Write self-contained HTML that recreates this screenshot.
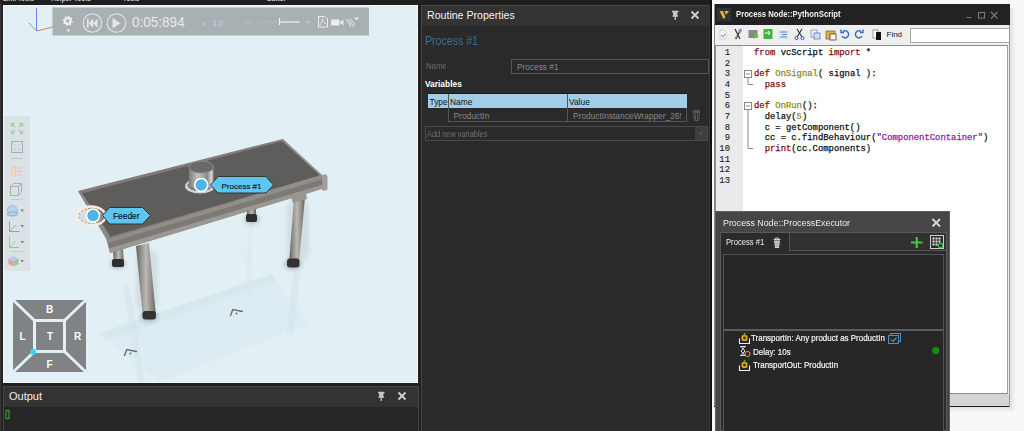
<!DOCTYPE html>
<html><head><meta charset="utf-8">
<style>
*{margin:0;padding:0;box-sizing:border-box}
html,body{width:1024px;height:431px;overflow:hidden;background:#1f1f1f;font-family:"Liberation Sans",sans-serif;position:relative}
.a{position:absolute}
.t{position:absolute;white-space:nowrap;line-height:1}
</style></head><body>

<!-- top menu remnants -->
<div class="t" style="left:3px;top:-4px;font-size:6.3px;color:#c8c8c8;font-weight:bold">Link Tools</div>
<div class="t" style="left:51px;top:-4px;font-size:6.7px;color:#d0d0d0;font-weight:bold">Helper Tools</div>
<div class="t" style="left:123px;top:-4px;font-size:6.3px;color:#d0d0d0;font-weight:bold">Tools</div>
<div class="t" style="left:267px;top:-4px;font-size:6.6px;color:#d0d0d0;font-weight:bold">Editor</div>
<div class="a" style="left:0;top:4px;width:2px;height:427px;background:linear-gradient(90deg,#343434 55%,#1c1c1c 100%)"></div>
<!-- viewport -->
<div class="a" id="vp" style="left:3px;top:5px;width:415px;height:378px;background:#e2f0f5;border:1px solid #f4fafc;overflow:hidden">
<svg class="a" style="left:-4px;top:-6px" width="1024" height="431" viewBox="0 0 1024 431">
 <defs>
  <linearGradient id="leg" x1="0" x2="1" y1="0" y2="0">
   <stop offset="0" stop-color="#625e5a"/><stop offset="0.25" stop-color="#94908b"/><stop offset="0.5" stop-color="#bcb8b3"/><stop offset="0.8" stop-color="#8c8884"/><stop offset="1" stop-color="#66625e"/>
  </linearGradient>
  <linearGradient id="rail" x1="0" x2="0" y1="0" y2="1">
   <stop offset="0" stop-color="#a7a39e"/><stop offset="0.5" stop-color="#8c8883"/><stop offset="1" stop-color="#6f6b67"/>
  </linearGradient>
  <linearGradient id="cyl" x1="0" x2="1" y1="0" y2="0">
   <stop offset="0" stop-color="#7e7c7a"/><stop offset="0.35" stop-color="#c4c2be"/><stop offset="0.75" stop-color="#8e8c88"/><stop offset="0.92" stop-color="#d8d8d6"/><stop offset="1" stop-color="#8a8886"/>
  </linearGradient>
  <filter id="bl" x="-50%" y="-50%" width="200%" height="200%"><feGaussianBlur stdDeviation="2.2"/></filter>
 </defs>
 <!-- floor reflection -->
 <polygon points="100,333 272,274 309,324 158,382" fill="#d8e9ef" opacity="0.55"/>
 <polygon points="100,333 272,274 276,280 106,341" fill="#d2e4ea" opacity="0.6"/>
 <line x1="126" y1="285" x2="142" y2="383" stroke="#d4e6ec" stroke-width="7" opacity="0.6"/>
 <line x1="297" y1="270" x2="290" y2="335" stroke="#d4e6ec" stroke-width="7" opacity="0.6"/>
 <line x1="250" y1="225" x2="249" y2="300" stroke="#d8e9ef" stroke-width="5" opacity="0.6"/>
 <!-- axis gizmo -->
 <line x1="36.5" y1="8" x2="36.5" y2="31" stroke="#6f7cf0" stroke-width="1"/>
 <line x1="29" y1="23" x2="36.5" y2="31" stroke="#60c060" stroke-width="1"/>
 <line x1="36.5" y1="31" x2="53" y2="27" stroke="#e07070" stroke-width="1"/>
 <!-- foot shadows -->
 <g filter="url(#bl)" fill="#8a9498" opacity="0.55">
  <ellipse cx="149" cy="316" rx="9" ry="6"/>
  <ellipse cx="293" cy="264" rx="9" ry="6"/>
  <ellipse cx="118" cy="264" rx="8" ry="5"/>
  <ellipse cx="252" cy="219" rx="8" ry="5"/>
  <rect x="136" y="250" width="22" height="60" rx="8" opacity="0.35"/>
  <rect x="287" y="200" width="22" height="60" rx="8" opacity="0.35"/>
 </g>
 <!-- legs back -->
 <polygon points="247,204 256,203 256,221 247,222" fill="url(#leg)"/>
 <rect x="246" y="214" width="11" height="8" rx="2" fill="#2e2e2e"/>
 <polygon points="113,249 123,248 124,266 114,267" fill="url(#leg)"/>
 <rect x="112" y="259" width="12" height="8" rx="2" fill="#2e2e2e"/>
 <!-- conveyor top frame -->
 <polygon points="78,191 283,139 322,175 107,240" fill="#807c78"/>
 <polygon points="81.5,193.5 282,141.2 320,175.5 109,237" fill="#5f5d5b"/>
 <polygon points="78,191 82.5,194 110,236 107,240" fill="#8f8b86"/>
 <line x1="283" y1="140" x2="320.5" y2="175" stroke="#a09c98" stroke-width="1"/>
 <!-- front rail -->
 <polygon points="106.5,239.5 320,175.5 326.5,175.5 326.5,187.5 110,253" fill="#7d7975"/>
 <polygon points="106.5,239.5 320,175.5 326.5,175.5 326.5,178 107.5,243" fill="#918d88"/>
 <polygon points="109,248.5 326.5,183.5 326.5,187.5 110,253" fill="#9b9792"/>
 <polygon points="322,176 325,174 327.5,176 327.5,190 322.5,191" fill="#a29e99"/>
<!-- legs front -->
 <polygon points="136,246 149,243 156,316 143,318" fill="url(#leg)"/>
 <rect x="142.5" y="311" width="13.5" height="8.5" rx="3" fill="#333"/>
 <polygon points="294,199 305,197 299,262 289,263" fill="url(#leg)"/>
 <polygon points="291,197 306,193 307,199 293,203" fill="#9a9691"/>
 <rect x="287" y="258.5" width="12.5" height="9" rx="3" fill="#333"/>
<!-- process cylinder -->
 <ellipse cx="200" cy="186" rx="15" ry="7.5" fill="#d2d2d0"/>
 <ellipse cx="200" cy="185.5" rx="12.5" ry="5.5" fill="#7d7b79"/>
 <path d="M189,167 V184 A12.3,5 0 0 0 213.6,184 V167 Z" fill="url(#cyl)"/>
 <ellipse cx="201.3" cy="167" rx="12.3" ry="6" fill="#6c6a68" stroke="#8f8d8a" stroke-width="1"/>
 <!-- feeder ring -->
 <ellipse cx="91" cy="216" rx="14.5" ry="9.5" fill="none" stroke="#f2eee8" stroke-width="2.5"/>
 <ellipse cx="91" cy="216" rx="12" ry="7.5" fill="rgba(200,204,204,0.45)" stroke="#d9902a" stroke-width="1" stroke-dasharray="2 2"/>
 <!-- markers -->
 <path d="M230.5,315.5 L232.8,309.5 L242.5,311.5" fill="none" stroke="#6e6e6e" stroke-width="1.4" stroke-linecap="round"/>
 <circle cx="236.5" cy="313.5" r="0.9" fill="#5e5e5e"/>
 <path d="M124.5,355.5 L126.8,349.5 L136.5,351.5" fill="none" stroke="#6e6e6e" stroke-width="1.4" stroke-linecap="round"/>
 <circle cx="130.5" cy="353.5" r="0.9" fill="#5e5e5e"/>
 <!-- labels -->
 <circle cx="93" cy="215.5" r="6.5" fill="#4db4ea" stroke="#fff" stroke-width="1.6"/>
 <polygon points="102.5,215.5 109.5,207.5 142.5,207.5 150.5,215.5 142.5,224 109.5,224" fill="#5cc6f0" stroke="#333" stroke-width="1"/>
 <text x="113" y="219" font-family="Liberation Sans" font-size="8.4" fill="#0a1428" stroke="#0a1428" stroke-width="0.15">Feeder</text>
 <circle cx="201.2" cy="185" r="6.5" fill="#4db4ea" stroke="#fff" stroke-width="1.6"/>
 <polygon points="210.5,185 218,176.5 266,176.5 273.5,185 266,193 218,193" fill="#5cc6f0" stroke="#333" stroke-width="1"/>
 <text x="221.5" y="188.6" font-family="Liberation Sans" font-size="8" fill="#0a1428" stroke="#0a1428" stroke-width="0.15">Process #1</text>
 <!-- playback toolbar -->
 <rect x="52.5" y="7.5" width="316.5" height="28" fill="#a8b0b2"/>
 <!-- left toolbar -->
 <rect x="4" y="116" width="26" height="155" fill="#dbe2e5"/>
 <!-- playback content -->
 <polygon points="68.31,15.73 69.31,15.92 69.64,17.46 70.27,17.89 71.82,17.60 72.39,18.45 71.53,19.77 71.68,20.52 72.97,21.41 72.78,22.41 71.24,22.74 70.81,23.37 71.10,24.92 70.25,25.49 68.93,24.63 68.18,24.78 67.29,26.07 66.29,25.88 65.96,24.34 65.33,23.91 63.78,24.20 63.21,23.35 64.07,22.03 63.92,21.28 62.63,20.39 62.82,19.39 64.36,19.06 64.79,18.43 64.50,16.88 65.35,16.31 66.67,17.17 67.42,17.02" fill="#ececec"/><circle cx="67.8" cy="20.9" r="1.7" fill="#a8b0b2"/>
 <polygon points="66.2,29.5 70.2,29.5 68.2,32" fill="#ececec"/>
 <circle cx="92.4" cy="23" r="9.2" fill="none" stroke="#e6e6e6" stroke-width="1.1"/>
 <rect x="87" y="18.6" width="1.6" height="9.2" fill="#e6e6e6"/>
 <polygon points="88.6,23.2 93.2,18.6 93.2,27.8" fill="#e6e6e6"/>
 <polygon points="93,23.2 97.6,18.6 97.6,27.8" fill="#e6e6e6"/>
 <circle cx="116.5" cy="23" r="9.3" fill="none" stroke="#e6e6e6" stroke-width="1.1"/>
 <polygon points="112.5,18 112.5,28.5 120.5,23.2" fill="#e6e6e6"/>
 <text x="132" y="26.9" font-family="Liberation Sans" font-size="14.8" fill="#e8eaea" transform="translate(132 0) scale(0.915 1) translate(-132 0)">0:05:894</text>
 <text x="202.8" y="25.7" font-family="Liberation Sans" font-size="8" fill="#acd8f6">x</text>
 <text x="212.5" y="25.7" font-family="Liberation Sans" font-size="9" fill="#acd8f6" transform="translate(212.5 0) scale(0.88 1) translate(-212.5 0)">1.0</text>
 <line x1="245.5" y1="22.5" x2="252" y2="22.5" stroke="#9ecde4" stroke-width="1.2"/>
 <line x1="257.5" y1="22" x2="279" y2="22" stroke="#96c2d8" stroke-width="1"/>
 <line x1="279" y1="22" x2="299.5" y2="22" stroke="#f4f4f4" stroke-width="1.2"/>
 <line x1="279.5" y1="18" x2="279.5" y2="25" stroke="#f4f4f4" stroke-width="1.2"/>
 <line x1="305" y1="22" x2="311.5" y2="22" stroke="#9ecde4" stroke-width="1.2"/>
 <line x1="308.25" y1="18.5" x2="308.25" y2="25.5" stroke="#9ecde4" stroke-width="1.2"/>
 <path d="M318.5,16.5 H325 L327.5,19 V27 H318.5 Z" fill="none" stroke="#ececec" stroke-width="1"/>
 <path d="M320,25 C322,21 323,19 322.5,18.5 C322,19 323,23 326,24" fill="none" stroke="#ececec" stroke-width="0.9"/>
 <rect x="331" y="19.5" width="8.5" height="6" rx="1" fill="#ececec"/>
 <polygon points="339.5,22.5 343.5,19.5 343.5,25.5" fill="#ececec"/>
 <path d="M346,19 L351,27 M348.5,19 L353.5,27 M351,19 L355,25" stroke="#ececec" stroke-width="1"/>
 <polygon points="354,17.5 359,17.5 356.5,20.5" fill="#ececec"/>
 <!-- left toolbar icons -->
 <g stroke="#8fd48f" stroke-width="1.2" fill="none">
  <path d="M11.5,126.5 V123.5 H14.5 M11.5,123.5 L15,127"/>
  <path d="M19.5,123.5 H22.5 V126.5 M22.5,123.5 L19,127"/>
  <path d="M11.5,130.5 V133.5 H14.5 M11.5,133.5 L15,130"/>
  <path d="M19.5,133.5 H22.5 V130.5 M22.5,133.5 L19,130"/>
 </g>
 <rect x="11.5" y="141.5" width="11" height="11" fill="none" stroke="#a9aeb0" stroke-width="1"/>
 <g stroke="#b5babc" stroke-width="0.8"><path d="M13.5,143.5 l2.5,2.5 M20.5,143.5 l-2.5,2.5 M13.5,150.5 l2.5,-2.5 M20.5,150.5 l-2.5,-2.5"/></g>
 <line x1="11" y1="158.5" x2="23" y2="158.5" stroke="#c2c8cb" stroke-width="1"/>
 <path d="M15,166.5 C10,166.5 10,176.5 15,176.5 Z" fill="none" stroke="#eec48a" stroke-width="1"/>
 <path d="M17,168 h5 M17,171.5 h5 M17,175 h5" stroke="#eec48a" stroke-width="1"/>
 <path d="M10.5,186.5 L13.5,183.5 H21.5 V192.5 L18.5,195.5 H10.5 Z M10.5,186.5 H18.5 V195.5 M18.5,186.5 L21.5,183.5" fill="none" stroke="#a8aeb1" stroke-width="1"/>
 <line x1="11" y1="199.5" x2="23" y2="199.5" stroke="#c2c8cb" stroke-width="1"/>
 <ellipse cx="12.5" cy="210.5" rx="5" ry="5" fill="#b4d4ee" stroke="#8fb8dc" stroke-width="0.8"/>
 <ellipse cx="12.5" cy="214" rx="5.5" ry="2" fill="none" stroke="#8fa0ab" stroke-width="0.8"/>
 <polygon points="20.5,209.5 24,209.5 22.25,212" fill="#7a8084"/>
 <path d="M9.5,221.5 V231.5 H19.5 M9.5,231.5 L15.5,225.5" fill="none" stroke="#9aa0a3" stroke-width="1"/>
 <polygon points="20.5,225 24,225 22.25,227.5" fill="#7a8084"/>
 <path d="M9.5,236.5 V247.5" stroke="#9cc0ee" stroke-width="1"/>
 <path d="M9.5,247.5 H19" stroke="#e89a9a" stroke-width="1"/>
 <path d="M9.5,247.5 L15.5,241" stroke="#98d098" stroke-width="1"/>
 <polygon points="20.5,241 24,241 22.25,243.5" fill="#7a8084"/>
 <line x1="11" y1="251.5" x2="23" y2="251.5" stroke="#c2c8cb" stroke-width="1"/>
 <polygon points="8.5,258.5 13.5,261 13.5,266.5 8.5,264" fill="#e0a0a8"/>
 <polygon points="13.5,261 18.5,258.5 18.5,264 13.5,266.5" fill="#98c898"/>
 <polygon points="8.5,258.5 13.5,256 18.5,258.5 13.5,261" fill="#b0d0ee"/>
 <polygon points="20.5,260 24,260 22.25,262.5" fill="#7a8084"/>

 <!-- view cube -->
 <rect x="13" y="300" width="73" height="72" fill="#7f8385"/>
 <g stroke="#e2f0f5" stroke-width="3" fill="none">
  <rect x="34.5" y="320.5" width="30" height="31"/>
  <path d="M11,298 L34.5,320.5 M88,298 L64.5,320.5 M11,374 L34.5,351.5 M88,374 L64.5,351.5"/>
 </g>
 <g font-family="Liberation Sans" font-weight="bold" font-size="10" fill="#fff" text-anchor="middle">
  <text x="49.5" y="312.5">B</text><text x="22.5" y="339.5">L</text><text x="50" y="339.5">T</text><text x="77.5" y="339.5">R</text><text x="49.5" y="367.5">F</text>
 </g>
 <circle cx="33.2" cy="352" r="3" fill="#30d8f0"/>
</svg>
</div>

<!-- output panel -->
<div class="a" style="left:3px;top:386px;width:416px;height:45px;background:#262626;border:1px solid #474747;border-bottom:none">
  <div class="a" style="left:0;top:0;width:414px;height:20px;background:#333"></div>
</div>
<div class="t" style="left:9px;top:391px;font-size:11px;color:#f0f0f0">Output</div>
<svg class="a" style="left:0;top:0" width="1024" height="431">
 <path d="M378,392.5 H384.5 M379.5,392.5 L380,397 H382.5 L383,392.5 M378.5,397 H384 M381.25,397 V401" stroke="#c8c8c8" stroke-width="1.3" fill="#c8c8c8"/>
 <path d="M398.5,392.5 L405.5,399.5 M405.5,392.5 L398.5,399.5" stroke="#d0d0d0" stroke-width="1.8"/>
 <rect x="6" y="410.5" width="3" height="8" stroke="#3fa33f" stroke-width="1.1" fill="none"/>
</svg>
<!-- routine properties panel -->
<div class="a" style="left:421px;top:5px;width:289px;height:426px;background:#2a2a2a;border:1px solid #474747;border-bottom:none;border-right-color:#3a3a3a">
  <div class="a" style="left:0;top:0;width:287px;height:20px;background:#333"></div>
</div>
<div class="t" style="left:427px;top:10px;font-size:10.6px;color:#f2f2f2">Routine Properties</div>
<svg class="a" style="left:0;top:0" width="1024" height="431">
 <path d="M672,11.5 H678.5 M673.5,11.5 L674,16 H676.5 L677,11.5 M672.5,16 H678 M675.25,16 V20" stroke="#c8c8c8" stroke-width="1.3" fill="#c8c8c8"/>
 <path d="M691.5,11.5 L698.5,18.5 M698.5,11.5 L691.5,18.5" stroke="#d0d0d0" stroke-width="1.8"/>
</svg>
<div class="t" style="left:425px;top:34.5px;font-size:12.6px;color:#36729a;transform:scaleX(0.84);transform-origin:0 0">Process #1</div>
<div class="t" style="left:425.5px;top:61.8px;font-size:8.8px;color:#707070;transform:scaleX(0.88);transform-origin:0 0">Name</div>
<div class="a" style="left:511px;top:59px;width:198px;height:15px;border:1px solid #555;background:#2a2a2a"></div>
<div class="t" style="left:517px;top:62.5px;font-size:8.3px;color:#8a8a8a">Process #1</div>
<div class="t" style="left:425px;top:79.5px;font-size:8.4px;color:#fff;font-weight:bold">Variables</div>
<div class="a" style="left:428px;top:94px;width:259px;height:14px;background:#a3cce8"></div>
<div class="a" style="left:448px;top:94px;width:1px;height:28px;background:#555"></div>
<div class="a" style="left:567px;top:94px;width:1px;height:28px;background:#555"></div>
<div class="a" style="left:448px;top:121px;width:239px;height:1px;background:#555"></div>
<div class="a" style="left:686px;top:108px;width:1px;height:14px;background:#555"></div>
<div class="a" style="left:428px;top:93px;width:259px;height:1px;background:#1a1a1a"></div>
<div class="t" style="left:429.5px;top:97.5px;font-size:8.4px;color:#111">Type</div>
<div class="t" style="left:450px;top:97.5px;font-size:8.4px;color:#111">Name</div>
<div class="t" style="left:569px;top:97.5px;font-size:8.4px;color:#111">Value</div>
<div class="t" style="left:453.5px;top:111.5px;font-size:8.4px;color:#888">ProductIn</div>
<div class="a" style="left:568px;top:108px;width:113px;height:13px;overflow:hidden"><div class="t" style="left:5px;top:3.5px;font-size:8.4px;color:#888">ProductInstanceWrapper_2650</div></div>
<svg class="a" style="left:0;top:0" width="1024" height="431">
 <path d="M692.5,111.5 H700.5 M694.5,111.5 V110 H698.5 V111.5 M693.5,112.5 L694.5,120.5 H698.5 L699.5,112.5 Z M695.5,113.5 V119.5 M697.5,113.5 V119.5" stroke="#5a5a5a" stroke-width="1" fill="none"/>
</svg>
<div class="a" style="left:425px;top:126px;width:283px;height:15px;border:1px solid #4a4a4a;background:#2a2a2a"></div>
<div class="a" style="left:695px;top:127px;width:12px;height:13px;background:#3e3e3e"></div>
<svg class="a" style="left:0;top:0" width="1024" height="431"><polygon points="698.5,132.5 703.5,132.5 701,135" fill="#555"/></svg>
<div class="t" style="left:427px;top:129.5px;font-size:8.6px;color:#727272;transform:scaleX(0.86);transform-origin:0 0">Add new variables</div>
<!-- right side background -->
<div class="a" style="left:711px;top:0;width:313px;height:431px;background:#f8f8f8"></div>
<div class="a" style="left:710px;top:0;width:2px;height:431px;background:#111"></div>

<style>
.cl{position:absolute;left:754px;white-space:pre;font-family:"Liberation Mono",monospace;font-weight:normal;font-size:8.9px;line-height:10px;color:#111;-webkit-text-stroke:0.25px currentColor}
.ln{position:absolute;left:700px;width:30px;text-align:right;white-space:pre;font-family:"Liberation Mono",monospace;font-weight:normal;font-size:8.9px;line-height:10px;color:#1a1a1a;-webkit-text-stroke:0.1px #1a1a1a}
.k{color:#7a1010}.f{color:#8a8a18}.n{color:#a88a20}.s{color:#9020a0}
</style>
<!-- python script window -->
<div class="a" style="left:714px;top:4px;width:296px;height:403px;background:#f0f0f0;border:1px solid #888"></div>
<div class="a" style="left:715px;top:4px;width:295px;height:21px;background:#222"></div>
<div class="a" style="left:716.5px;top:8px;width:14.5px;height:13px;background:#2b3340"></div>
<svg class="a" style="left:0;top:0" width="1024" height="431">
 <polygon points="719.5,11 723,11 725.5,17.5 723.5,19" fill="#f0b020"/>
 <polygon points="724.5,11 729,11 726,15" fill="#f0b020"/>
 <path d="M966.5,17.5 H971.5" stroke="#7a7a7a" stroke-width="1"/>
 <rect x="978.5" y="12.5" width="6" height="5.5" fill="none" stroke="#7a7a7a" stroke-width="1.1"/>
 <path d="M991,12 L997.5,18.5 M997.5,12 L991,18.5" stroke="#7a7a7a" stroke-width="1.1"/>
</svg>
<div class="t" style="left:736.3px;top:9.5px;font-size:9.2px;font-weight:bold;color:#f2f2f2;transform:scaleX(0.84);transform-origin:0 0">Process Node::PythonScript</div>
<!-- toolbar -->
<div class="a" style="left:715px;top:25px;width:294px;height:20px;background:#efeff0"></div>
<svg class="a" style="left:0;top:0" width="1024" height="431">
 <path d="M720,30 H724 L726,32 V39 H720 Z" fill="#f4f4f4" stroke="#c8c8c8" stroke-width="0.8"/>
 <path d="M721,35 L723,37 L725,34" stroke="#6a8cd8" stroke-width="1" fill="none"/>
 <path d="M735,29 L740,39 M741,29 L736,39" stroke="#3a3a3a" stroke-width="1.3"/>
 <circle cx="740" cy="31" r="1.8" fill="#6a9ae8"/><path d="M735,39 l2,-3" stroke="#d08020" stroke-width="1.5"/>
 <rect x="748.5" y="30" width="9" height="8" fill="#888" />
 <polygon points="754,33 759,36 754,39" fill="#60c040"/>
 <rect x="763.5" y="29" width="9" height="10" fill="#3cb83c"/>
 <path d="M765,33 h5 l-2,-2 M770,33 l-2,2" stroke="#fff" stroke-width="1" fill="none"/>
 <rect x="778" y="30" width="11" height="9" fill="#dce8f4"/>
 <path d="M780,32 h7 M782,34.5 h5 M780,37 h7" stroke="#4a80c0" stroke-width="0.9"/>
 <path d="M797,29 L802,37 M802,29 L797,37" stroke="#2e2e2e" stroke-width="1.1"/>
 <circle cx="796.5" cy="38" r="1.6" fill="none" stroke="#3060c0"/><circle cx="802.5" cy="38" r="1.6" fill="none" stroke="#3060c0"/>
 <rect x="811" y="30" width="6" height="7" fill="#eef2f8" stroke="#6a8ac0" stroke-width="0.7"/>
 <rect x="814" y="33" width="6" height="6" fill="#cfe0f4" stroke="#4a70b0" stroke-width="0.7"/>
 <rect x="826" y="31" width="9" height="8" fill="#e0b040" stroke="#806020" stroke-width="0.7"/>
 <rect x="830" y="34" width="6" height="6" fill="#f4f4f4" stroke="#333" stroke-width="0.7"/>
 <path d="M842,36 A3.5,3.5 0 1 0 843,31.5 M841,29.5 v3 h3" stroke="#2a6ac8" stroke-width="1.4" fill="none"/>
 <path d="M862,36 A3.5,3.5 0 1 1 861,31.5 M863,29.5 v3 h-3" stroke="#2a6ac8" stroke-width="1.4" fill="none"/>
 <rect x="873" y="30" width="5" height="8" fill="#fff" stroke="#777" stroke-width="0.7"/>
 <rect x="876" y="32" width="5" height="8" fill="#111"/>
</svg>
<div class="t" style="left:886.5px;top:31px;font-size:8px;color:#111">Find</div>
<div class="a" style="left:909.5px;top:27.5px;width:101px;height:15px;background:#fff;border:1px solid #a8a8a8;border-right:none"></div>
<!-- editor -->
<div class="a" style="left:715px;top:45px;width:293px;height:349px;background:#fff;border:1px solid #8a8a8a;border-right:1px solid #a0a0a0"></div>
<div class="a" style="left:716px;top:46px;width:27px;height:347px;background:#eaeaea"></div>
<div class="a" style="left:715px;top:394px;width:294px;height:12px;background:#d5d5d5"></div>
<div class="a" style="left:714px;top:406px;width:296px;height:1px;background:#222"></div>
<div class="a" style="left:1009px;top:25px;width:1px;height:382px;background:#9a9a9a"></div>
<div class="a" style="left:1010px;top:8px;width:6px;height:403px;background:linear-gradient(90deg,#e0e0e0,#f8f8f8)"></div>
<div class="a" style="left:950px;top:407px;width:62px;height:5px;background:linear-gradient(180deg,#e0e0e0,#f8f8f8)"></div>
<svg class="a" style="left:0;top:0" width="1024" height="431">
 <g stroke="#8a8a8a" stroke-width="1" fill="none">
  <rect x="744.5" y="70.5" width="7" height="7"/><path d="M746,74 h4"/>
  <path d="M748,77.5 V84.5 H753"/>
  <rect x="744.5" y="102.5" width="7" height="7"/><path d="M746,106 h4"/>
  <path d="M748,109.5 V148.5 H753"/>
 </g>
</svg>
<div class="ln" style="top:47.90px">1</div>
<div class="ln" style="top:58.56px">2</div>
<div class="ln" style="top:69.22px">3</div>
<div class="ln" style="top:79.88px">4</div>
<div class="ln" style="top:90.54px">5</div>
<div class="ln" style="top:101.20px">6</div>
<div class="ln" style="top:111.86px">7</div>
<div class="ln" style="top:122.52px">8</div>
<div class="ln" style="top:133.18px">9</div>
<div class="ln" style="top:143.84px">10</div>
<div class="ln" style="top:154.50px">11</div>
<div class="ln" style="top:165.16px">12</div>
<div class="ln" style="top:175.82px">13</div>
<div class="cl" style="top:47.90px"><span class="k">from</span> vcScript <span class="k">import</span> *</div>
<div class="cl" style="top:58.56px"></div>
<div class="cl" style="top:69.22px"><span class="k">def</span> <span class="f">OnSignal</span>( signal ):</div>
<div class="cl" style="top:79.88px">  <span class="k">pass</span></div>
<div class="cl" style="top:90.54px"></div>
<div class="cl" style="top:101.20px"><span class="k">def</span> <span class="f">OnRun</span>():</div>
<div class="cl" style="top:111.86px">  delay(<span class="n">5</span>)</div>
<div class="cl" style="top:122.52px">  c = getComponent()</div>
<div class="cl" style="top:133.18px">  cc = c.findBehaviour(<span class="s">"ComponentContainer"</span>)</div>
<div class="cl" style="top:143.84px">  <span class="k">print</span>(cc.Components)</div>
<div class="cl" style="top:154.50px"></div>
<div class="cl" style="top:165.16px"></div>
<div class="cl" style="top:175.82px"></div>
<!-- process executor window -->
<div class="a" style="left:715px;top:211px;width:235px;height:220px;background:#464646;border:1px solid #5e5e5e;border-bottom:none"></div>
<div class="t" style="left:722.5px;top:217.5px;font-size:9.6px;color:#ececec;transform:scaleX(0.92);transform-origin:0 0">Process Node::ProcessExecutor</div>
<svg class="a" style="left:0;top:0" width="1024" height="431">
 <path d="M932.5,219 L940,226.5 M940,219 L932.5,226.5" stroke="#d8d8d8" stroke-width="1.8"/>
</svg>
<!-- tab strip -->
<div class="a" style="left:720px;top:232px;width:227px;height:199px;background:#2b2b2b;border:1px solid #5a5a5a"></div>
<div class="a" style="left:789px;top:233px;width:157px;height:18px;background:#313131;border-left:1px solid #555;border-bottom:1px solid #555"></div>
<div class="t" style="left:725.5px;top:237.5px;font-size:8.8px;color:#f0f0f0;transform:scaleX(0.87);transform-origin:0 0">Process #1</div>
<svg class="a" style="left:0;top:0" width="1024" height="431">
 <path d="M773.5,239.5 H780.5 M775.5,239.5 V238 H778.5 V239.5" stroke="#cfcfcf" stroke-width="1" fill="none"/>
 <path d="M774,240.5 L775,248 H779 L780,240.5 Z" fill="#cfcfcf"/>
 <path d="M776,242 V247 M778,242 V247" stroke="#888" stroke-width="0.7"/>
 <path d="M911,242.5 H922.5 M916.75,237 V248" stroke="#3cc83c" stroke-width="2.2"/>
 <rect x="930.5" y="235.5" width="13" height="13" fill="#2b2b2b" stroke="#cfcfcf" stroke-width="1"/>
 <g fill="#e8e8e8">
  <rect x="932.5" y="237.5" width="2" height="2"/><rect x="935.5" y="237.5" width="2" height="2"/><rect x="938.5" y="237.5" width="2" height="2"/>
  <rect x="932.5" y="240.5" width="2" height="2"/><rect x="935.5" y="240.5" width="2" height="2"/><rect x="938.5" y="240.5" width="2" height="2"/>
  <rect x="932.5" y="243.5" width="2" height="2"/><rect x="935.5" y="243.5" width="2" height="2"/>
 </g>
 <circle cx="940.5" cy="245.5" r="2.2" fill="none" stroke="#3cc83c" stroke-width="1.2"/>
</svg>
<!-- inner panel -->
<div class="a" style="left:723px;top:254px;width:221px;height:177px;background:#272727;border:1px solid #555;border-bottom:none"></div>
<div class="a" style="left:724px;top:329px;width:219px;height:2px;background:#5c5c5c"></div>
<svg class="a" style="left:0;top:0" width="1024" height="431">
 <g>
  <path d="M739.5,338.5 V343.5 H749.5 V338.5" fill="none" stroke="#f0f0f0" stroke-width="1.1"/>
  <rect x="741.5" y="335" width="6" height="6" rx="2" fill="#e8a820"/>
  <circle cx="744.5" cy="338" r="1.4" fill="#3a3020"/>
  <circle cx="744.5" cy="333.8" r="1" fill="#3cc83c"/>
  <path d="M739.5,365.5 V370.5 H749.5 V365.5" fill="none" stroke="#f0f0f0" stroke-width="1.1"/>
  <rect x="741.5" y="362" width="6" height="6" rx="2" fill="#e8a820"/>
  <circle cx="744.5" cy="365" r="1.4" fill="#3a3020"/>
  <circle cx="744.5" cy="360.8" r="1" fill="#3cc83c"/>
  <path d="M740,346.5 h6 M740,355.5 h6 M741,346.5 l4,4.5 l-4,4.5 M745,346.5 l-4,4.5 l4,4.5" fill="none" stroke="#e0e0e0" stroke-width="1"/>
  <circle cx="747.5" cy="354" r="2.6" fill="#2b2b2b" stroke="#e8a820" stroke-width="1"/>
 </g>
 <rect x="890.5" y="333.5" width="10" height="8" fill="none" stroke="#4a90d0" stroke-width="1"/>
 <rect x="888.5" y="335.5" width="10" height="8" fill="#2b2b2b" stroke="#4a90d0" stroke-width="1"/>
 <path d="M891,339.5 l2,2 l3.5,-4" stroke="#8ac0f0" stroke-width="1" fill="none"/>
 <circle cx="935.8" cy="350.6" r="3.6" fill="#148c14"/>
</svg>
<div class="t" style="left:751px;top:334.2px;font-size:9px;color:#f4f4f4;-webkit-text-stroke:0.2px #f4f4f4;transform:scaleX(0.885);transform-origin:0 0">TransportIn: Any product as ProductIn</div>
<div class="t" style="left:753px;top:347.7px;font-size:9px;color:#f4f4f4;-webkit-text-stroke:0.2px #f4f4f4;transform:scaleX(0.885);transform-origin:0 0">Delay: 10s</div>
<div class="t" style="left:753px;top:361.2px;font-size:9px;color:#f4f4f4;-webkit-text-stroke:0.2px #f4f4f4;transform:scaleX(0.885);transform-origin:0 0">TransportOut: ProductIn</div>
</body></html>
